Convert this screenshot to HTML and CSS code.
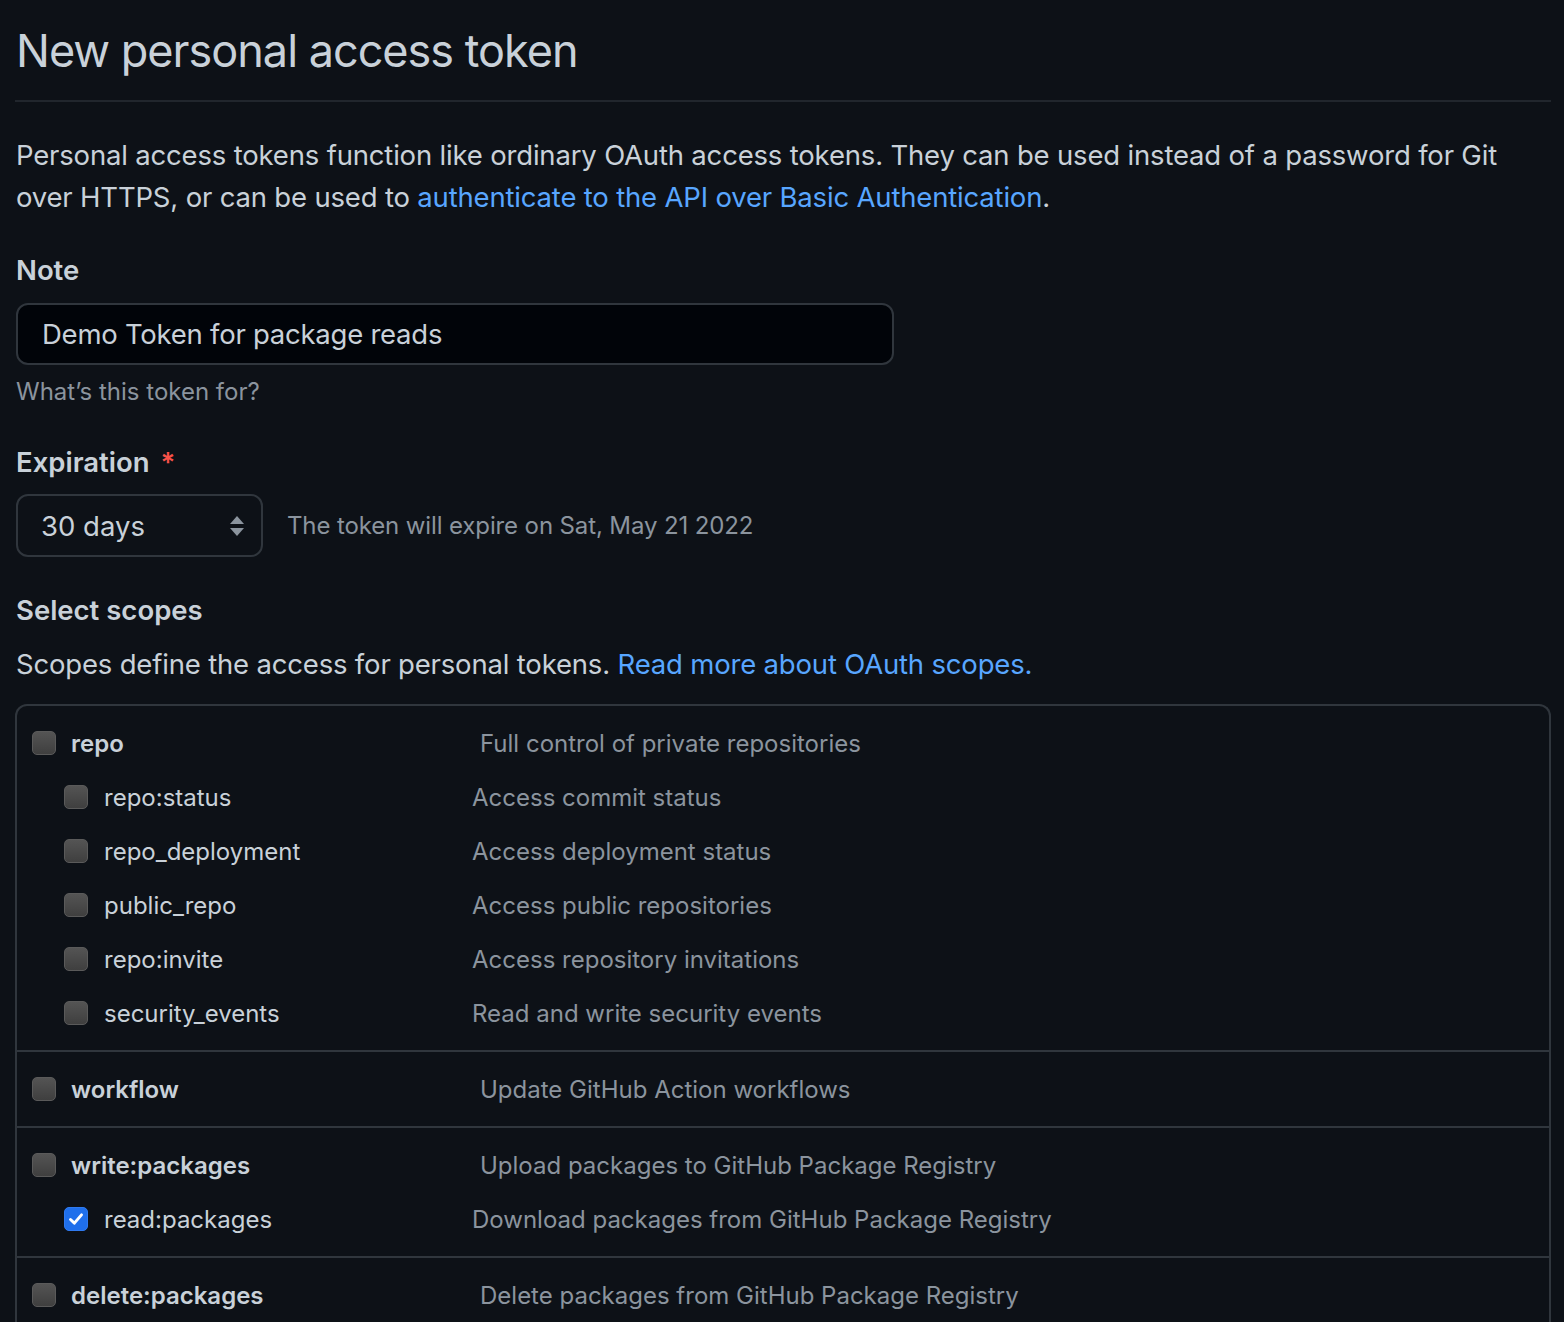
FILE: index.html
```html
<!DOCTYPE html>
<html lang="en">
<head>
<meta charset="utf-8">
<title>New personal access token</title>
<link rel="stylesheet" href="styles.css">
</head>
<body>
<div class="page">
  <div class="subhead">
    <h1 class="subhead-title">New personal access token</h1>
  </div>
  <p class="intro">Personal access tokens function like ordinary OAuth access tokens. They can be used instead of a password for Git over HTTPS, or can be used to <a href="#" class="link">authenticate to the API over Basic Authentication</a>.</p>

  <div class="form-group note-group">
    <label class="form-label">Note</label>
    <div class="input">Demo Token for package reads</div>
    <p class="hint">What’s this token for?</p>
  </div>

  <div class="form-group exp-group">
    <label class="form-label">Expiration <span class="req">*</span></label>
    <div class="exp-row">
      <div class="select">
        <span>30 days</span>
        <svg class="select-arrows" width="16" height="22" viewBox="0 0 16 22"><path d="M8 1 L15 9 H1 Z" fill="#8b949e"/><path d="M8 21 L15 13 H1 Z" fill="#8b949e"/></svg>
      </div>
      <span class="exp-text">The token will expire on Sat, May 21 2022</span>
    </div>
  </div>

  <h3 class="section-title">Select scopes</h3>
  <p class="section-desc">Scopes define the access for personal tokens. <a href="#" class="link">Read more about OAuth scopes.</a></p>

  <div class="scopes">
    <div class="scope-group">
      <div class="scope main"><span class="cb"></span><span class="name">repo</span><span class="desc">Full control of private repositories</span></div>
      <div class="scope sub"><span class="cb"></span><span class="name">repo:status</span><span class="desc">Access commit status</span></div>
      <div class="scope sub"><span class="cb"></span><span class="name">repo_deployment</span><span class="desc">Access deployment status</span></div>
      <div class="scope sub"><span class="cb"></span><span class="name">public_repo</span><span class="desc">Access public repositories</span></div>
      <div class="scope sub"><span class="cb"></span><span class="name">repo:invite</span><span class="desc">Access repository invitations</span></div>
      <div class="scope sub"><span class="cb"></span><span class="name">security_events</span><span class="desc">Read and write security events</span></div>
    </div>
    <div class="scope-group">
      <div class="scope main"><span class="cb"></span><span class="name">workflow</span><span class="desc">Update GitHub Action workflows</span></div>
    </div>
    <div class="scope-group">
      <div class="scope main"><span class="cb"></span><span class="name">write:packages</span><span class="desc">Upload packages to GitHub Package Registry</span></div>
      <div class="scope sub"><span class="cb checked"><svg width="24" height="24" viewBox="0 0 24 24"><path d="M6 12.5 L10.2 16.5 L18 7.5" fill="none" stroke="#fff" stroke-width="3.2" stroke-linecap="round" stroke-linejoin="round"/></svg></span><span class="name">read:packages</span><span class="desc">Download packages from GitHub Package Registry</span></div>
    </div>
    <div class="scope-group">
      <div class="scope main"><span class="cb"></span><span class="name">delete:packages</span><span class="desc">Delete packages from GitHub Package Registry</span></div>
    </div>
  </div>
</div>
</body>
</html>
```
FILE: styles.css
```css
html, body {
  margin: 0;
  padding: 0;
  background: #0d1117;
  color: #c9d1d9;
  font-family: Inter, "Noto Sans", "Liberation Sans", sans-serif;
}
.page {
  width: 1536px;
  padding-left: 15px;
  box-sizing: content-box;
}
.subhead {
  border-bottom: 2px solid #21262d;
  padding-top: 20px;
  padding-bottom: 18px;
}
.subhead-title {
  margin: 0;
  font-size: 45px;
  font-weight: 400;
  line-height: 62px;
  padding-left: 1px;
  letter-spacing: -1px;
}
.intro {
  margin: 32px 0 0 1px;
  font-size: 27.5px;
  line-height: 42px;
  letter-spacing: -0.18px;
}
.link {
  color: #58a6ff;
  text-decoration: none;
}
.form-group { margin-left: 1px; }
.note-group { margin-top: 32px; }
.form-label {
  display: block;
  font-size: 27.5px;
  font-weight: 600;
  line-height: 40px;
}
.input {
  margin-top: 13px;
  width: 878px;
  height: 62px;
  box-sizing: border-box;
  border: 2px solid #30363d;
  border-radius: 12px;
  background: #010409;
  padding: 0 24px;
  display: flex;
  align-items: center;
  font-size: 27.5px;
  letter-spacing: -0.25px;
}
.hint {
  margin: 9px 0 0;
  font-size: 24px;
  line-height: 36px;
  color: #8b949e;
}
.exp-group { margin-top: 32px; }
.req {
  color: #f85149;
  margin-left: 4px;
}
.exp-row {
  margin-top: 12px;
  display: flex;
  align-items: center;
  gap: 24px;
}
.select {
  width: 247px;
  height: 63px;
  box-sizing: border-box;
  border: 2px solid #30363d;
  border-radius: 12px;
  display: flex;
  align-items: center;
  justify-content: space-between;
  padding: 0 16px 0 23px;
  font-size: 27.5px;
}
.select-arrows { display: block; }
.exp-text {
  font-size: 24px;
  letter-spacing: -0.12px;
  color: #8b949e;
}
.section-title {
  margin: 33px 0 0 1px;
  font-size: 27.5px;
  font-weight: 600;
  line-height: 40px;
}
.section-desc {
  margin: 13px 0 0 1px;
  font-size: 27.5px;
  line-height: 42px;
  letter-spacing: -0.18px;
}
.scopes {
  margin-top: 19px;
  border: 2px solid #30363d;
  border-radius: 12px;
  border-bottom: none;
  border-bottom-left-radius: 0;
  border-bottom-right-radius: 0;
}
.scope-group {
  padding: 10px 0;
  border-top: 2px solid #30363d;
}
.scope-group:first-child {
  border-top: none;
  padding-top: 10px;
}
.scope {
  height: 54px;
  display: flex;
  align-items: center;
  font-size: 24px;
}
.scope.main { padding-left: 15px; }
.scope.sub { padding-left: 47px; }
.cb {
  width: 24px;
  height: 24px;
  box-sizing: border-box;
  border-radius: 5px;
  background: linear-gradient(#545454, #3f3f3f);
  border: 1px solid #5a5a5a;
  flex: none;
  display: flex;
  align-items: center;
  justify-content: center;
}
.cb.checked {
  background: #1f6feb;
  border-color: #2f7af0;
}
.cb svg { display: block; }
.name {
  flex: none;
  color: #c9d1d9;
}
.main .name {
  margin-left: 15px;
  width: 409px;
  font-weight: 600;
}
.sub .name {
  margin-left: 16px;
  width: 368px;
}
.desc {
  color: #8b949e;
}
```
